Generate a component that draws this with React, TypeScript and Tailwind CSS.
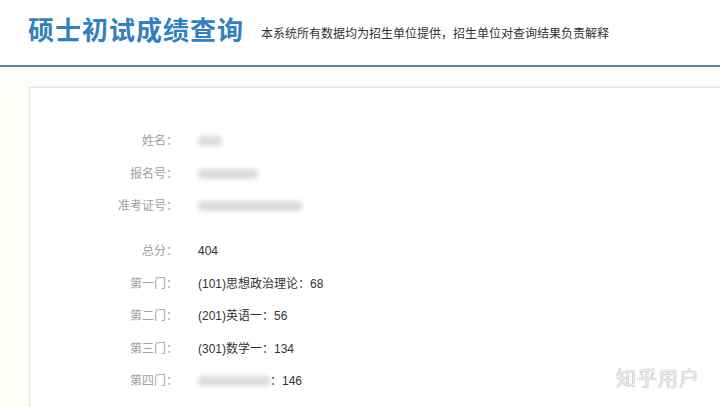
const font = "font-['Liberation_Sans','Noto_Sans_CJK_SC',sans-serif]";

type Row = { label: string; value?: string; blur?: number; suffix?: string };

const info: Row[] = [
  { label: '姓名：', blur: 24 },
  { label: '报名号：', blur: 60 },
  { label: '准考证号：', blur: 104 },
];

const scores: Row[] = [
  { label: '总分：', value: '404' },
  { label: '第一门：', value: '(101)思想政治理论：68' },
  { label: '第二门：', value: '(201)英语一：56' },
  { label: '第三门：', value: '(301)数学一：134' },
  { label: '第四门：', blur: 72, suffix: '：146' },
];

function Line({ row }: { row: Row }) {
  return (
    <div className="flex h-[32.6px] items-center text-[12px]">
      <div className="w-[148px] text-right text-[#a0a0a0]">{row.label}</div>
      <div className="ml-[20px] flex items-center text-[#333]">
        {row.value}
        {row.blur && (
          <span
            className="block h-[10px] rounded-sm bg-[#dcdcdc] blur-[2px]"
            style={{ width: row.blur }}
          />
        )}
        {row.suffix}
      </div>
    </div>
  );
}

export default function App() {
  return (
    <div className={`${font} relative h-[407px] w-[720px] overflow-hidden bg-white`}>
      <header className="flex h-[67px] items-center border-b-2 border-[#5b8a96] pb-[2px] pl-[28px]">
        <h1 className="text-[26px] font-bold tracking-[1px] text-[#3380c0]">硕士初试成绩查询</h1>
        <p className="ml-[17px] mt-[4px] text-[12px] text-[#333]">
          本系统所有数据均为招生单位提供，招生单位对查询结果负责解释
        </p>
      </header>
      <main className="h-full bg-[#fdfdfa] pl-[29px] pt-[20px]">
        <section className="h-[400px] w-[1000px] border border-[#e4e4e4] bg-white pt-[37px] shadow-[0_0_3px_rgba(0,0,0,0.06)]">
          {info.map((r) => (
            <Line key={r.label} row={r} />
          ))}
          <div className="h-[12px]" />
          {scores.map((r) => (
            <Line key={r.label} row={r} />
          ))}
        </section>
      </main>
      <div className="absolute bottom-[14px] right-[20px] font-['Noto_Sans_CJK_SC',sans-serif] text-[20px] tracking-[1px] text-[#efefef] [text-shadow:0_0_1px_#7a7a7a]">
        知乎用户
      </div>
    </div>
  );
}
